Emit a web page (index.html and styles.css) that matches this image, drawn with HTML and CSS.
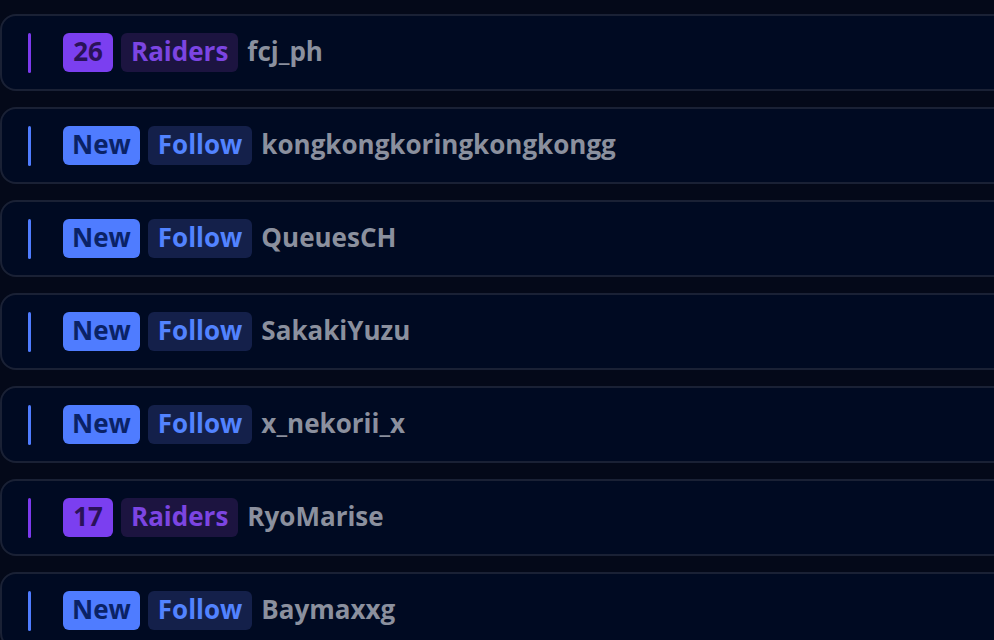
FILE: index.html
```html
<!DOCTYPE html>
<html lang="en">
<head>
    <meta charset="UTF-8">
    <title>Event Feed</title>
    <link rel="stylesheet" href="styles.css">
</head>
<body>
    <div class="feed">
        <div class="event raid">
            <span class="bar"></span>
            <span class="badge">26</span>
            <span class="chip">Raiders</span>
            <span class="user">fcj_ph</span>
        </div>
        <div class="event follow">
            <span class="bar"></span>
            <span class="badge">New</span>
            <span class="chip">Follow</span>
            <span class="user">kongkongkoringkongkongg</span>
        </div>
        <div class="event follow">
            <span class="bar"></span>
            <span class="badge">New</span>
            <span class="chip">Follow</span>
            <span class="user">QueuesCH</span>
        </div>
        <div class="event follow">
            <span class="bar"></span>
            <span class="badge">New</span>
            <span class="chip">Follow</span>
            <span class="user">SakakiYuzu</span>
        </div>
        <div class="event follow">
            <span class="bar"></span>
            <span class="badge">New</span>
            <span class="chip">Follow</span>
            <span class="user">x_nekorii_x</span>
        </div>
        <div class="event raid">
            <span class="bar"></span>
            <span class="badge">17</span>
            <span class="chip">Raiders</span>
            <span class="user">RyoMarise</span>
        </div>
        <div class="event follow">
            <span class="bar"></span>
            <span class="badge">New</span>
            <span class="chip">Follow</span>
            <span class="user">Baymaxxg</span>
        </div>
    </div>
</body>
</html>
```

FILE: styles.css
```css
body {
    margin: 0;
    padding: 0;
    background: #040919;
    font-family: 'Open Sans', 'Noto Sans', sans-serif;
    font-weight: 700;
    overflow: hidden;
    height: 640px;
}
.feed {
    display: flex;
    flex-direction: column;
    gap: 16px;
    padding-top: 14px;
}
.event {
    display: flex;
    align-items: center;
    height: 77px;
    box-sizing: border-box;
    width: calc(100% + 30px);
    padding-left: 26px;
    background: #000a22;
    border: 2px solid #1a2135;
    border-radius: 16px;
}
.bar {
    width: 3px;
    height: 40px;
    border-radius: 2px;
    margin-right: 32px;
}
.badge, .chip {
    display: flex;
    align-items: center;
    justify-content: center;
    box-sizing: border-box;
    height: 39px;
    padding-bottom: 3px;
    border-radius: 6px;
    font-size: 26px;
}
.badge {
    min-width: 50px;
    padding-left: 9px;
    padding-right: 9px;
    margin-right: 8px;
}
.chip {
    padding-left: 10px;
    padding-right: 10px;
    margin-right: 9px;
}
.user {
    font-size: 26px;
    color: #8b909e;
    padding-bottom: 3px;
}
.raid .bar { background: #7c3aed; }
.raid .badge { background: #7b3ff0; color: #2a1259; }
.raid .chip { background: #1c1440; color: #7c45e2; }
.follow .bar { background: #4f7cff; }
.follow .badge { background: #4f7cff; color: #0a2266; }
.follow .chip { background: #14204a; color: #5283ff; }
```
